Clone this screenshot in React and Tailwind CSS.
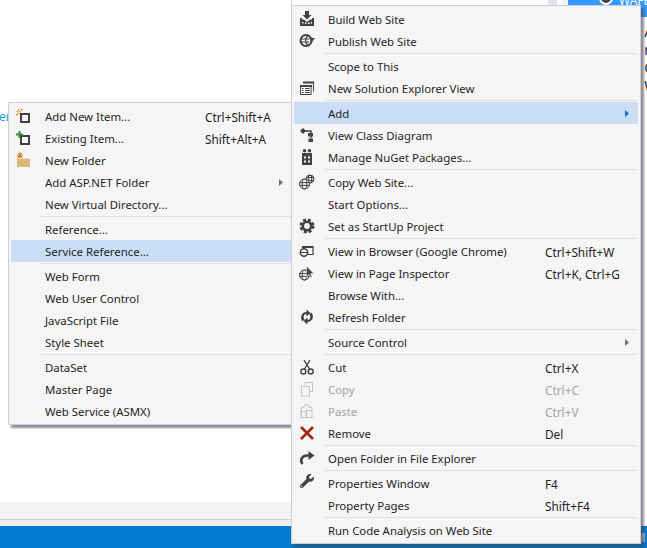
import React from "react";
import { FaWrench } from "react-icons/fa";

const D = "#424242";
const G = "#c4c4c4";
const S = ({ children }) => (
  <svg width="16" height="16" viewBox="0 0 16 16" fill="none" className="block shrink-0">{children}</svg>
);

const Globe = ({ cx = 7, cy = 9, r = 4.5, c = D }) => (
  <g stroke={c} strokeWidth="1">
    <circle cx={cx} cy={cy} r={r} fill="#f5f5f5" />
    <ellipse cx={cx} cy={cy} rx={r / 2.2} ry={r} />
    <path d={`M${cx - r} ${cy - 1.4}H${cx + r}M${cx - r} ${cy + 1.4}H${cx + r}`} />
  </g>
);

const icons = {
  build: (
    <S>
      <path d="M6 0h4v4h2.500L8 8.500 3.500 4H6z" fill={D} />
      <path d="M1 7h2v1.500h2L8 11l3-2.500h2V7h2v8H1z" fill={D} />
      <path d="M3 11h1.500v1.500H3zM6 11.500h1.500V13H6zM9 11.500h1.500V13H9zM11.500 11h1.500v1.500h-1.500z" fill="#f5f5f5" />
    </S>
  ),
  publish: (
    <S>
      <circle cx="7" cy="7.500" r="5.500" stroke={D} strokeWidth="2" />
      <path d="M2 6h8M2 9h8" stroke={D} strokeWidth="1.200" />
      <path d="M9 3C6 4.500 6 10.500 9 12" stroke={D} strokeWidth="1.200" />
      <path d="M10 5h6l-3 4z" fill={D} />
    </S>
  ),
  view: (
    <S>
      <path d="M4 2.500h10.500v9" stroke={D} strokeWidth="1" />
      <path d="M4 1.500h11v2H4z" fill={D} />
      <rect x="1.500" y="5.500" width="10.500" height="9" fill="#f5f5f5" stroke={D} strokeWidth="1" />
      <path d="M1 5h12v2H1z" fill={D} />
      <path d="M3 8.500h1.500M6 8.500h4.500M3 10.500h1.500M6 10.500h4.500M3 12.500h1.500M6 12.500h4.500" stroke={D} strokeWidth="1" />
    </S>
  ),
  diagram: (
    <S>
      <path d="M1 4l3-3 3 3-3 3z" fill={D} />
      <path d="M5 4h7v7" stroke={D} strokeWidth="1.400" />
      <path d="M9 6h5v3.500H9zM9.500 11.500h4.500V15H9.500z" fill={D} />
    </S>
  ),
  nuget: (
    <S>
      <circle cx="5.500" cy="1.800" r="1.800" fill={D} />
      <circle cx="10.500" cy="1.800" r="1.800" fill={D} />
      <path d="M3 4h10v12H3z" fill={D} />
      <path d="M5 7.500h2v2H5zM9 7.500h2v2H9zM5 11.500h2v2H5zM9 11.500h2v2H9z" fill="#f5f5f5" />
    </S>
  ),
  copysite: (
    <S>
      <Globe cx={11} cy={5} r={4} />
      <Globe cx={5.500} cy={10} r={5} />
    </S>
  ),
  gear: (
    <S>
      <circle cx="8" cy="8" r="6.200" stroke={D} strokeWidth="2.600" strokeDasharray="2.900 2" />
      <circle cx="8" cy="8" r="4.200" stroke={D} strokeWidth="2.600" />
    </S>
  ),
  browser: (
    <S>
      <path d="M3.500 5V3.500h10.500v8H9" stroke={D} strokeWidth="1.200" />
      <path d="M3.500 3h10.500v2H3.500z" fill={D} />
      <circle cx="5" cy="9.500" r="3.700" stroke={D} strokeWidth="1.500" fill="#f5f5f5" />
      <path d="M1.500 9.500h7" stroke={D} strokeWidth="1" />
    </S>
  ),
  inspector: (
    <S>
      <Globe cx={5.500} cy={10} r={5} />
      <path d="M7.500 1v11l2.500-2.500 1.500 3 1.500-.800-1.500-3H15z" fill={D} stroke="#f5f5f5" strokeWidth=".600" />
    </S>
  ),
  refresh: (
    <S>
      <path d="M3.500 12.500C.500 8.500 2.500 3 7.500 3V.500l4 3.500-4 3.500V5C4.500 5 4 8 5.500 10.500z" fill={D} />
      <path d="M12.500 3.500c3 4 1 9.500-4 9.500v2.500l-4-3.500 4-3.500V11c3 0 3.500-3 2-5.500z" fill={D} />
    </S>
  ),
  cut: (
    <S>
      <path d="M5 1l5.500 9M11 1L5.500 10" stroke={D} strokeWidth="1.400" />
      <circle cx="4.300" cy="12.500" r="2.500" stroke={D} strokeWidth="1.400" />
      <circle cx="11.700" cy="12.500" r="2.500" stroke={D} strokeWidth="1.400" />
    </S>
  ),
  copy: (
    <S>
      <path d="M6 4V1.500h7.500v9H11" stroke={G} strokeWidth="1" />
      <rect x="2.500" y="5.500" width="8" height="9.500" stroke={G} strokeWidth="1" />
    </S>
  ),
  paste: (
    <S>
      <path d="M2.500 14.500v-10h2V3h1.500V1.500h3V3h1.500v1.500h2.500V7" stroke={G} strokeWidth="1" />
      <rect x="2" y="8.500" width="5" height="6" stroke={G} strokeWidth="1" />
      <rect x="7.500" y="7.500" width="5.500" height="7" stroke={G} strokeWidth="1" />
    </S>
  ),
  remove: (
    <S>
      <path d="M2 2l12 12M14 2L2 14" stroke="#a1260d" strokeWidth="2.600" />
    </S>
  ),
  redo: (
    <S>
      <path d="M3.500 14C.500 10 3 5.500 8.500 5.500H11" stroke={D} strokeWidth="2.600" />
      <path d="M9.500 1l6 4.500-6 4.500z" fill={D} />
    </S>
  ),
  wrench: <FaWrench size={14} color={D} className="block ml-[1px] -mt-[1px]" />,
  addnew: (
    <S>
      <rect x="5" y="6" width="8" height="8" stroke={D} strokeWidth="2" />
      <path d="M2 1h1.500v1.500H2zM5 1h1.500v1.500H5zM.500 3h1.500v1.500H.500zM3.500 3h1.500v1.500H3.500zM0 6h1.500v1.500H0zM2 5h1.500v1.500H2z" fill="#d08a2c" />
    </S>
  ),
  existing: (
    <S>
      <rect x="5" y="6" width="8" height="8" stroke={D} strokeWidth="2" />
      <path d="M2.500 1h2v2.500H7v2H4.500V8h-2V5.500H0v-2h2.500z" fill="#388a34" />
    </S>
  ),
  folder: (
    <S>
      <path d="M1 4h5l1 2h7v9H1z" fill="#dcb67a" />
      <path d="M2 6.500h12" stroke="#f0e0c4" strokeWidth="1" />
      <path d="M4 0v6M1 3h6M2 1l4 4M6 1L2 5" stroke="#c27d1a" strokeWidth="1" />
    </S>
  ),
};

const Sep = () => <div className="h-[3px] flex items-center pl-[30px] pr-[1px]"><div className="h-px w-full bg-[#e0e0e0]" /></div>;

function Row({ label, icon, key2, hot, off, sub, subBlue, labelW }) {
  return (
    <div className={`h-[22px] flex items-center pl-[5px] pr-[9px] text-[11.4px] leading-[22px] ${hot ? "bg-[#c9def5]" : ""} ${off ? "text-[#a2a4a5]" : "text-[#1e1e1e]"}`}>
      <div className="w-[16px] h-[16px] shrink-0">{icon && icons[icon]}</div>
      <div className="ml-[13px] pt-[1px] whitespace-nowrap shrink-0" style={{ width: labelW }}>{label}</div>
      {key2 && <div className="pt-[1px] text-[11.8px] whitespace-nowrap">{key2}</div>}
      {sub && (
        <svg width="4" height="7" viewBox="0 0 4 7" className="ml-auto shrink-0">
          <path d="M0 0l4 3.500L0 7z" fill={subBlue ? "#1c6fc4" : "#717171"} />
        </svg>
      )}
    </div>
  );
}

const leftItems = [
  { label: "Add New Item...", icon: "addnew", key2: "Ctrl+Shift+A" },
  { label: "Existing Item...", icon: "existing", key2: "Shift+Alt+A" },
  { label: "New Folder", icon: "folder" },
  { label: "Add ASP.NET Folder", sub: true },
  { label: "New Virtual Directory..." },
  "-",
  { label: "Reference..." },
  { label: "Service Reference...", hot: true },
  "-",
  { label: "Web Form" },
  { label: "Web User Control" },
  { label: "JavaScript File" },
  { label: "Style Sheet" },
  "-",
  { label: "DataSet" },
  { label: "Master Page" },
  { label: "Web Service (ASMX)" },
];

const rightItems = [
  { label: "Build Web Site", icon: "build" },
  { label: "Publish Web Site", icon: "publish" },
  "-",
  { label: "Scope to This" },
  { label: "New Solution Explorer View", icon: "view" },
  "-",
  { label: "Add", hot: true, sub: true, subBlue: true },
  { label: "View Class Diagram", icon: "diagram" },
  { label: "Manage NuGet Packages...", icon: "nuget" },
  "-",
  { label: "Copy Web Site...", icon: "copysite" },
  { label: "Start Options..." },
  { label: "Set as StartUp Project", icon: "gear" },
  "-",
  { label: "View in Browser (Google Chrome)", icon: "browser", key2: "Ctrl+Shift+W" },
  { label: "View in Page Inspector", icon: "inspector", key2: "Ctrl+K, Ctrl+G" },
  { label: "Browse With..." },
  { label: "Refresh Folder", icon: "refresh" },
  "-",
  { label: "Source Control", sub: true },
  "-",
  { label: "Cut", icon: "cut", key2: "Ctrl+X" },
  { label: "Copy", icon: "copy", key2: "Ctrl+C", off: true },
  { label: "Paste", icon: "paste", key2: "Ctrl+V", off: true },
  { label: "Remove", icon: "remove", key2: "Del" },
  "-",
  { label: "Open Folder in File Explorer", icon: "redo" },
  "-",
  { label: "Properties Window", icon: "wrench", key2: "F4" },
  { label: "Property Pages", key2: "Shift+F4" },
  "-",
  { label: "Run Code Analysis on Web Site" },
];

function Menu({ items, labelW, className }) {
  return (
    <div className={`absolute bg-[#f5f5f5] border border-[#cccedb] p-[2px] shadow-[3px_3px_2px_rgba(70,70,80,0.6)] ${className}`}>
      {items.map((it, i) =>
        it === "-" ? <Sep key={i} /> : <Row key={i} {...it} labelW={labelW} />
      )}
    </div>
  );
}

export default function App() {
  return (
    <div className="relative w-[647px] h-[548px] overflow-hidden bg-white flex flex-col" style={{ fontFamily: '"Noto Sans", sans-serif' }}>
      <div className="flex-1 flex min-h-0">
        <div className="w-[291px] shrink-0 flex flex-col">
          <div className="flex-1 pt-[108px] text-[12px] leading-[18px] text-[#1ba1e2] overflow-hidden">
            <span className="block -ml-[1px]">er</span>
          </div>
          <div className="h-[17px] bg-[#f3f3f3]" />
          <div className="h-px bg-[#cccedb]" />
          <div className="h-[6px] bg-[#eeeef2]" />
        </div>
        <div className="flex-1 border-l border-[#cccedb] flex flex-col">
          <div className="h-[17px] flex shrink-0">
            <div className="w-[256px]" />
            <div className="w-[9px] bg-[#e3e3ee]" />
            <div className="w-[5px]" />
            <div className="w-[6px] bg-[#f0f0f5]" />
            <div className="flex-1 bg-[#3399ff] flex items-start pl-[31px] gap-[6px] overflow-hidden">
              <div className="w-[14px] h-[14px] rounded-full border-2 border-white bg-[#424242] shrink-0 -mt-[9px]" />
              <div className="text-[12px] leading-[12px] text-white whitespace-nowrap -mt-[5px]">WAFE</div>
            </div>
          </div>
          <div className="flex-1 flex justify-end pt-[6px] overflow-hidden">
            <div className="w-[6px] text-[14px] leading-[18px] text-[#1e1e1e] whitespace-nowrap">
              <div>A</div>
              <div>n</div>
              <div>O</div>
              <div>W</div>
            </div>
          </div>
        </div>
      </div>
      <div className="h-[22px] bg-[#007acc] shrink-0 flex justify-end items-center">
        <div className="w-[4px] h-[9px] bg-[#9fb8c4] mr-[2px] mt-[1px]" />
      </div>
      <Menu items={leftItems} labelW={160} className="left-[8px] top-[102px] w-[287px]" />
      <Menu items={rightItems} labelW={217} className="left-[291px] top-[5px] w-[350px]" />
    </div>
  );
}
